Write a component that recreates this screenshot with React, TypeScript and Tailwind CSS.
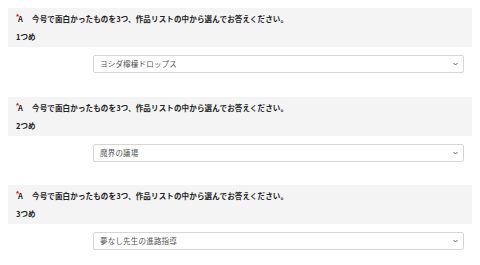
import React from "react";

const items = [
  { n: "1つめ", v: "ヨシダ檸檬ドロップス" },
  { n: "2つめ", v: "魔界の議場" },
  { n: "3つめ", v: "夢なし先生の進路指導" },
];

function Chevron() {
  return (
    <svg width="5" height="4" viewBox="0 0 5 4" className="shrink-0">
      <path d="M0.5 1 L2.5 3 L4.5 1" fill="none" stroke="#666" strokeWidth="1" />
    </svg>
  );
}

export default function App() {
  return (
    <div
      className="w-[480px] h-[265px] bg-white px-2 pt-2 overflow-hidden"
      style={{ fontFamily: '"Noto Sans CJK JP", "Noto Sans", sans-serif' }}
    >
      {items.map((it, i) => (
        <div key={i} className="mb-[23.5px]">
          <div className="bg-[#f4f4f4] h-[39px] pl-2 pt-[2px] text-[#222] text-[7.5px] font-bold">
            <div className="leading-[18px] flex items-center">
              <span className="relative w-[9px] h-[18px] inline-block">
                <span
                  className="absolute top-[3px] left-0 text-[#e60000] text-[8px] leading-none"
                  style={{ fontFamily: '"Liberation Sans", sans-serif' }}
                >
                  *
                </span>
                <span className="absolute left-[2px] top-0">A</span>
              </span>
              <span className="ml-[7px] tracking-[0.15px]">
                今号で面白かったものを3つ、作品リストの中から選んでお答えください。
              </span>
            </div>
            <div className="leading-[18px]">{it.n}</div>
          </div>
          <div className="mt-2 ml-[85px] mr-2 h-[18px] border border-[#d6d6d6] rounded-[2px] bg-white flex items-center justify-between pl-[6px] pr-[5px]">
            <span className="text-[7.5px] text-[#555] leading-none tracking-[0.2px]">{it.v}</span>
            <Chevron />
          </div>
        </div>
      ))}
    </div>
  );
}
